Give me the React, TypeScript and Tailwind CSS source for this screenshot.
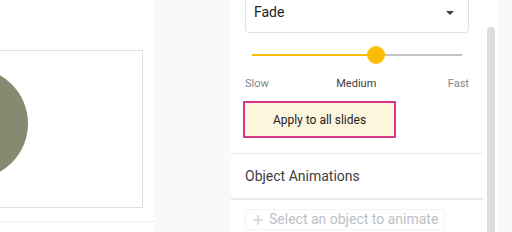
import { Plus } from "lucide-react";

function SlideCanvas() {
  return (
    <div className="flex w-[155px] shrink-0 flex-col bg-white">
      <div className="mt-[50px] ml-[-138px] relative h-[158px] w-[281px] shrink-0 border border-[#e0e0e0] bg-white">
        {/* shape on the slide */}
        <div className="absolute left-[54px] top-[17px] h-[111px] w-[111px] rounded-full bg-[#868a70]" />
      </div>
      <div className="mt-[13px] border-t border-dotted border-[#e3e3e3]" />
    </div>
  );
}

function SpeedSlider() {
  const pct = 59;
  return (
    <div className="flex flex-col">
      <div className="relative mx-[7px] mt-[13px] h-[18px]">
        <div className="absolute left-0 right-0 top-[8px] h-[2px] bg-[#c4c4c4]" />
        <div className="absolute left-0 top-[8px] h-[2px] bg-[#fbbc04]" style={{ width: `${pct}%` }} />
        <div
          className="absolute top-0 h-[18px] w-[18px] -translate-x-1/2 rounded-full bg-[#fbbc04]"
          style={{ left: `${pct}%` }}
        />
      </div>
      <div className="mt-[13px] flex items-center justify-between text-[11px] leading-[14px]">
        <span className="text-[#80868b]">Slow</span>
        <span className="mr-[4px] text-[#3c4043]">Medium</span>
        <span className="text-[#80868b]">Fast</span>
      </div>
    </div>
  );
}

function TransitionPanel() {
  return (
    <div className="flex w-[267px] shrink-0 bg-white">
      <div className="flex w-[252px] flex-col">
        <div className="flex flex-col px-[14px]">
          <div className="mt-[-8px] flex h-[41px] w-[224px] items-center justify-between rounded-[4px] border border-[#e3e3e3] pl-[8px] pr-[14px]">
            <span className="text-[14px] text-[#202124]">Fade</span>
            <span className="h-0 w-0 border-x-[4px] border-t-[4px] border-x-transparent border-t-[#3c4043]" />
          </div>
          <SpeedSlider />
          <button
            type="button"
            className="mt-[10px] ml-[-2px] flex h-[37px] w-[153px] items-center justify-center border-2 border-[#d8368b] bg-[#fef6dc] text-[12px] font-normal text-[#202124]"
          >
            Apply to all slides
          </button>
        </div>
        <div className="mt-[15px] border-t border-[#e8eaed]" />
        <div className="flex h-[44px] items-center px-[14px] text-[14px] text-[#3c4043]">Object Animations</div>
        <div className="h-[2px] bg-[#e8eaed]" />
        <div className="px-[14px] pt-[9px]">
          <div className="flex h-[21px] w-[200px] items-center gap-[3px] rounded-[4px] border border-[#f1f3f4] pl-[4px] text-[14px] text-[#bdc1c6]">
            <Plus size={16} strokeWidth={1.5} />
            <span>Select an object to animate</span>
          </div>
        </div>
      </div>
      <div className="flex w-[15px] flex-col pl-[4px] pt-[27px]">
        <div className="w-[8px] flex-1 rounded-t-full bg-[#dadce0]" />
      </div>
    </div>
  );
}

export default function App() {
  return (
    <div className="flex h-[232px] w-[512px] overflow-hidden bg-white font-['Roboto',sans-serif]">
      <SlideCanvas />
      <div className="w-[76px] shrink-0 bg-[#f8f9fa]" />
      <TransitionPanel />
      <div className="flex-1 bg-[#f8f9fa]" />
    </div>
  );
}
